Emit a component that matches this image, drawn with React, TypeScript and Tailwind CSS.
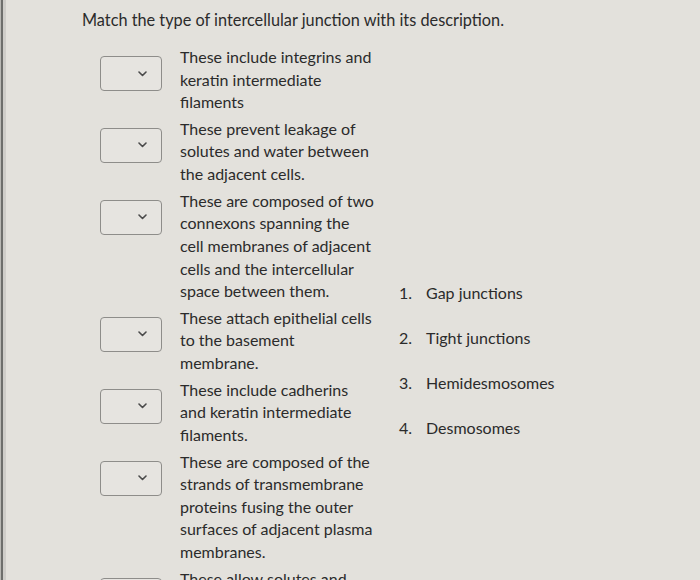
import React from "react";

const rows: string[][] = [
  ["These include integrins and", "keratin intermediate", "filaments"],
  ["These prevent leakage of", "solutes and water between", "the adjacent cells."],
  [
    "These are composed of two",
    "connexons spanning the",
    "cell membranes of adjacent",
    "cells and the intercellular",
    "space between them.",
  ],
  ["These attach epithelial cells", "to the basement", "membrane."],
  ["These include cadherins", "and keratin intermediate", "filaments."],
  [
    "These are composed of the",
    "strands of transmembrane",
    "proteins fusing the outer",
    "surfaces of adjacent plasma",
    "membranes.",
  ],
  ["These allow solutes and", "ions to pass"],
];

const options = ["Gap junctions", "Tight junctions", "Hemidesmosomes", "Desmosomes"];

function Select() {
  return (
    <div className="mt-[10px] flex h-[35px] w-[62px] shrink-0 items-center justify-end rounded-[4px] border border-[#8e8d8a] bg-[#e6e4e0] pr-[14px]">
      <svg width="9" height="6" viewBox="0 0 9 6" fill="none">
        <path d="M1 1 L4.5 4.5 L8 1" stroke="#4a4a4a" strokeWidth="1.6" strokeLinecap="round" strokeLinejoin="round" />
      </svg>
    </div>
  );
}

export default function App() {
  return (
    <div
      className="relative flex h-[580px] w-[700px] overflow-hidden bg-[#e3e1dc] text-[#2b2b2b]"
      style={{ fontFamily: "Lato, 'Open Sans', sans-serif" }}
    >
      <div className="h-full w-[1px] shrink-0 bg-[#b9b8b4]" />
      <div className="h-full w-[2px] shrink-0 bg-[#6e6e6c]" />
      <div className="h-full w-[3px] shrink-0 bg-[#cfcdc9]" />
      <div className="flex flex-1 flex-col pl-[76px] pt-[8px]">
        <div className="text-[16.3px] leading-[24px]">
          Match the type of intercellular junction with its description.
        </div>
        <div className="mt-[14px] flex">
          <div className="flex w-[300px] flex-col gap-[4.3px] pl-[18px]">
            {rows.map((lines, i) => (
              <div key={i} className="flex gap-[18px]">
                <Select />
                <div className="text-[16px] leading-[22.55px]">
                  {lines.map((l, j) => (
                    <div key={j} className="whitespace-nowrap">
                      {l}
                    </div>
                  ))}
                </div>
              </div>
            ))}
          </div>
          <div className="flex flex-col gap-[22.5px] pl-[17px] pt-[236px]">
            {options.map((o, i) => (
              <div key={i} className="flex text-[16px] leading-[22.5px]">
                <span className="w-[27px]">{i + 1}.</span>
                <span>{o}</span>
              </div>
            ))}
          </div>
        </div>
      </div>
    </div>
  );
}
